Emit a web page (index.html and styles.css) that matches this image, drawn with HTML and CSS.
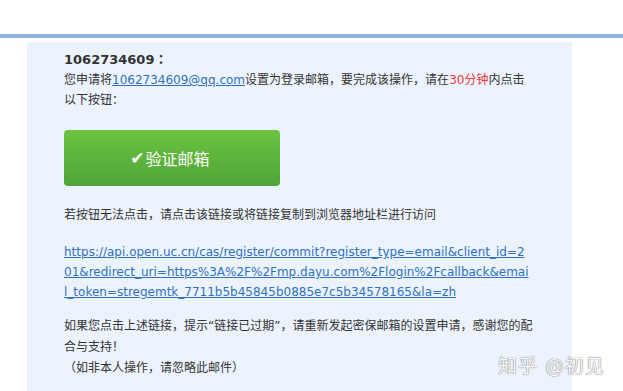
FILE: index.html
```html
<!DOCTYPE html>
<html lang="zh-CN">
<head>
<meta charset="utf-8">
<title>验证邮箱</title>
<link rel="stylesheet" href="styles.css">
</head>
<body>
<div class="topbar"></div>
<div class="panel">
  <p class="greet">1062734609<span class="pu">：</span></p>
  <p class="intro">您申请将<a class="lnk" href="#">1062734609@qq.com</a>设置为登录邮箱<span class="pu">，</span>要完成该操作<span class="pu">，</span>请在<span class="red">30分钟</span>内点击<br>以下按钮<span class="pu">：</span></p>
  <a class="btn" href="#"><span class="chk">✔</span>验证邮箱</a>
  <p class="hint">若按钮无法点击<span class="pu">，</span>请点击该链接或将链接复制到浏览器地址栏进行访问</p>
  <p class="url"><a class="lnk" href="#">https://api.open.uc.cn/cas/register/commit?register_type=email&amp;client_id=2<br>01&amp;redirect_uri=https%3A%2F%2Fmp.dayu.com%2Flogin%2Fcallback&amp;emai<br>l_token=stregemtk_7711b5b45845b0885e7c5b34578165&amp;la=zh</a></p>
  <p class="foot">如果您点击上述链接<span class="pu">，</span>提示“链接已过期”<span class="pu">，</span>请重新发起密保邮箱的设置申请<span class="pu">，</span>感谢您的配<br>合与支持<span class="pu">！</span><br><span class="pu">（</span>如非本人操作<span class="pu">，</span>请忽略此邮件<span class="pu">）</span></p>
</div>
<div class="mark">知乎 @初见</div>
</body>
</html>
```
FILE: styles.css
```css
html, body {
  margin: 0;
  padding: 0;
  background: #fff;
  overflow: hidden;
}
body {
  font-family: "DejaVu Sans", "Noto Sans CJK SC", sans-serif;
  font-size: 12px;
  color: #333;
  height: 391px;
  position: relative;
}
.topbar {
  margin-top: 34px;
  height: 4px;
  background: #8db3e1;
}
.panel {
  margin: 4px 0 0 27px;
  width: 545px;
  box-sizing: border-box;
  padding: 8px 38px 20px 37px;
  background: #edf3fd;
  min-height: 360px;
}
p {
  margin: 0;
  line-height: 20px;
}
.pu {
  font-family: "Noto Sans CJK TC", sans-serif;
  line-height: 12px;
}
.greet {
  font-weight: bold;
  font-size: 13px;
}
.lnk {
  color: #2f72c0;
  text-decoration: underline;
}
.red {
  color: #ea3a3a;
}
.btn {
  display: flex;
  align-items: center;
  justify-content: center;
  margin-top: 20px;
  width: 216px;
  height: 56px;
  border-radius: 4px;
  background: linear-gradient(#6cc23f, #50a53a);
  color: #fff;
  font-size: 16px;
  text-decoration: none;
}
.chk {
  font-size: 17px;
  margin-right: 1px;
  margin-left: -4px;
}
.hint {
  margin-top: 19px;
}
.url {
  margin-top: 17px;
  white-space: nowrap;
}
.foot {
  margin-top: 14px;
  white-space: nowrap;
  line-height: 21px;
}
.mark {
  position: absolute;
  right: 18px;
  top: 351px;
  font-size: 19px;
  color: #fafafa;
  letter-spacing: 1px;
  text-shadow: 0 0 1px #666, 0 0 1px #999;
}
```
